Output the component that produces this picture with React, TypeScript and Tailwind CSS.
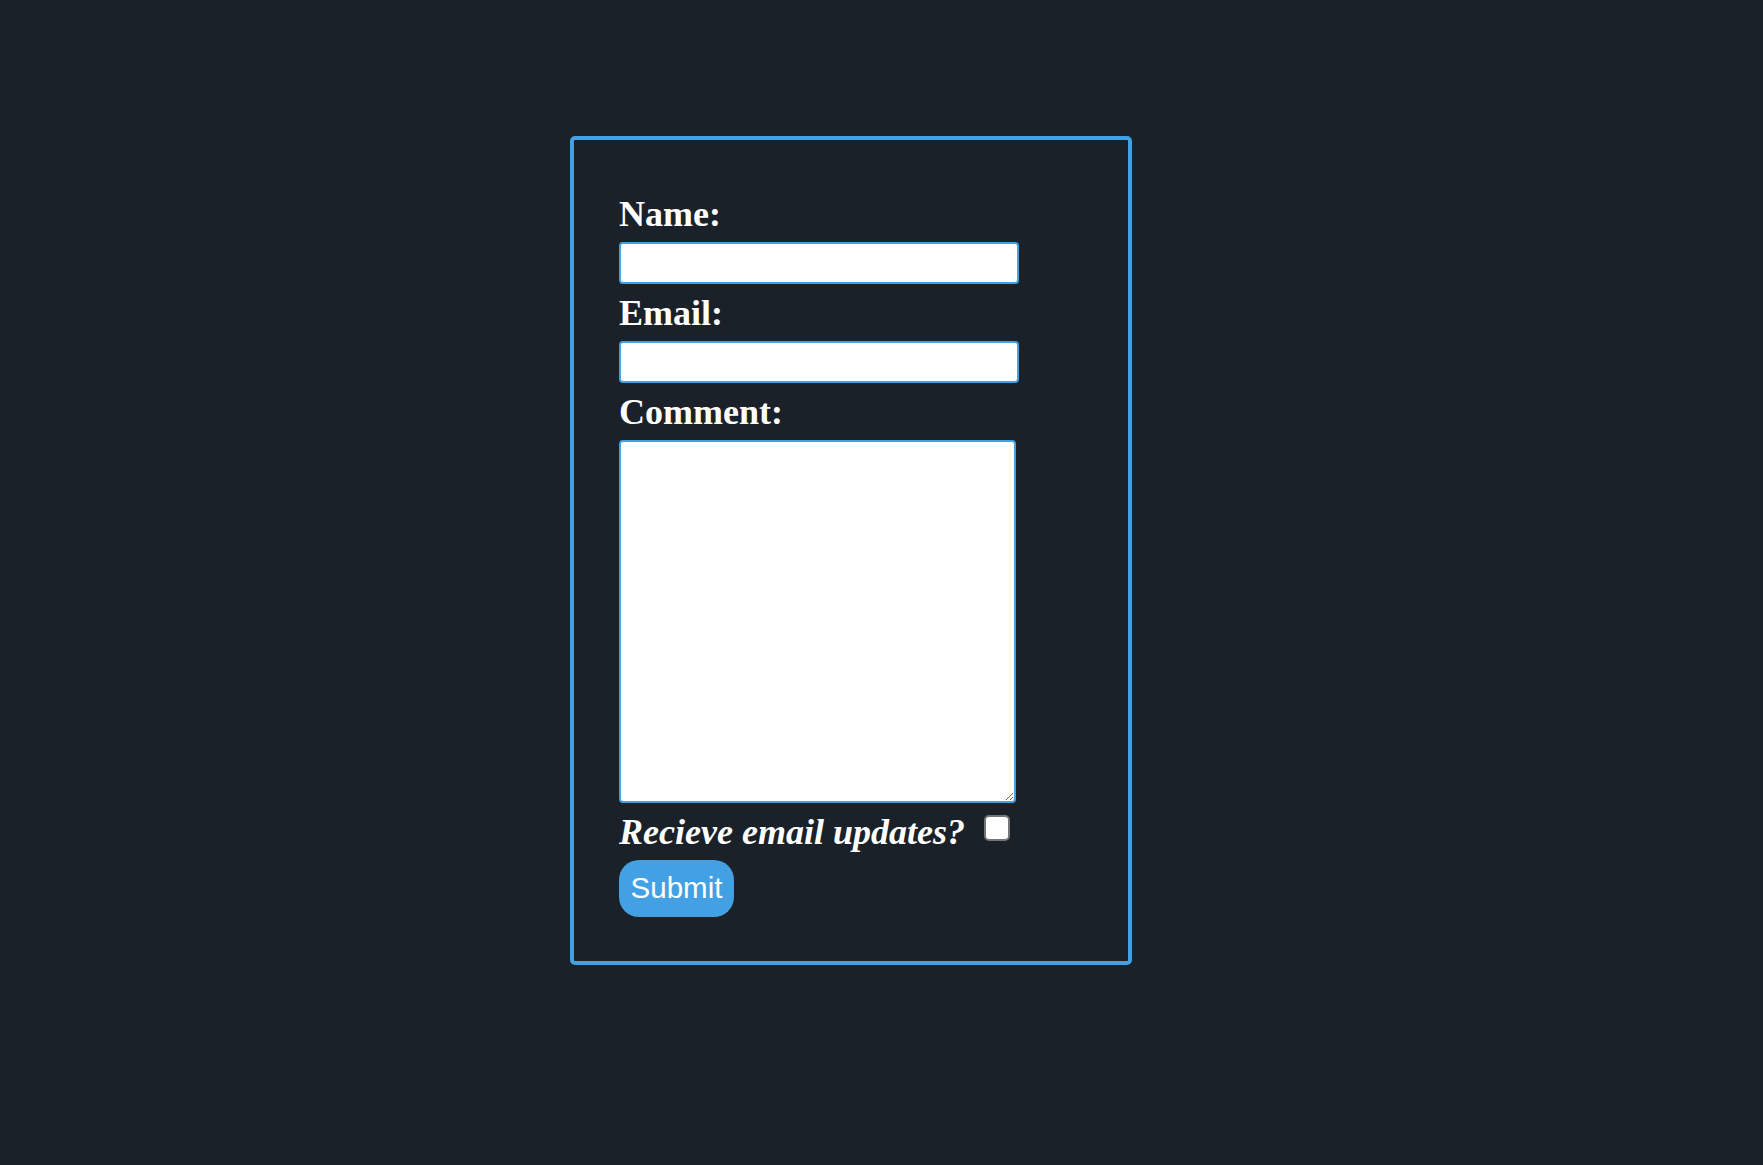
import { useState } from 'react'

export default function App() {
  const [updates, setUpdates] = useState(false)

  return (
    <div className="min-h-screen bg-[#1b2129] pt-[136px] pl-[570px]">
      <form
        onSubmit={(e) => e.preventDefault()}
        className="w-[562px] border-4 border-[#43a1e3] rounded-[5px] pt-[53px] px-[45px] pb-[44px] flex flex-col items-start gap-[8px]"
        style={{ fontFamily: '"Liberation Serif", serif' }}
      >
        <label htmlFor="name" className="text-[36px] leading-[40px] pt-[1px] font-bold text-white">
          Name:
        </label>
        <input
          id="name"
          type="text"
          className="w-[400px] h-[42px] bg-white border-2 border-[#43a1e3] rounded-[4px] px-2 text-base text-black outline-none"
        />

        <label htmlFor="email" className="text-[36px] leading-[40px] pt-[1px] font-bold text-white">
          Email:
        </label>
        <input
          id="email"
          type="email"
          className="w-[400px] h-[42px] bg-white border-2 border-[#43a1e3] rounded-[4px] px-2 text-base text-black outline-none"
        />

        <label htmlFor="comment" className="text-[36px] leading-[40px] pt-[1px] font-bold text-white">
          Comment:
        </label>
        <textarea
          id="comment"
          className="w-[397px] h-[363px] bg-white border-2 border-[#43a1e3] rounded-[4px] p-1 text-base text-black outline-none"
        />

        {/* checkbox row */}
        <div className="flex items-start h-[41px]">
          <label htmlFor="updates" className="text-[36px] leading-[40px] pt-[1px] font-bold italic text-white">
            Recieve email updates?
          </label>
          <input
            id="updates"
            type="checkbox"
            checked={updates}
            onChange={(e) => setUpdates(e.target.checked)}
            className="appearance-none w-[26px] h-[26px] ml-[19px] mt-[4px] bg-white border-2 border-[#767676] rounded-[5px] checked:bg-[#43a1e3]"
          />
        </div>

        <button
          type="submit"
          className="w-[115px] h-[57px] rounded-[20px] bg-[#43a1e3] text-white text-[29.5px] flex items-center justify-center"
          style={{ fontFamily: '"Liberation Sans", Arial, sans-serif' }}
        >
          Submit
        </button>
      </form>
    </div>
  )
}
